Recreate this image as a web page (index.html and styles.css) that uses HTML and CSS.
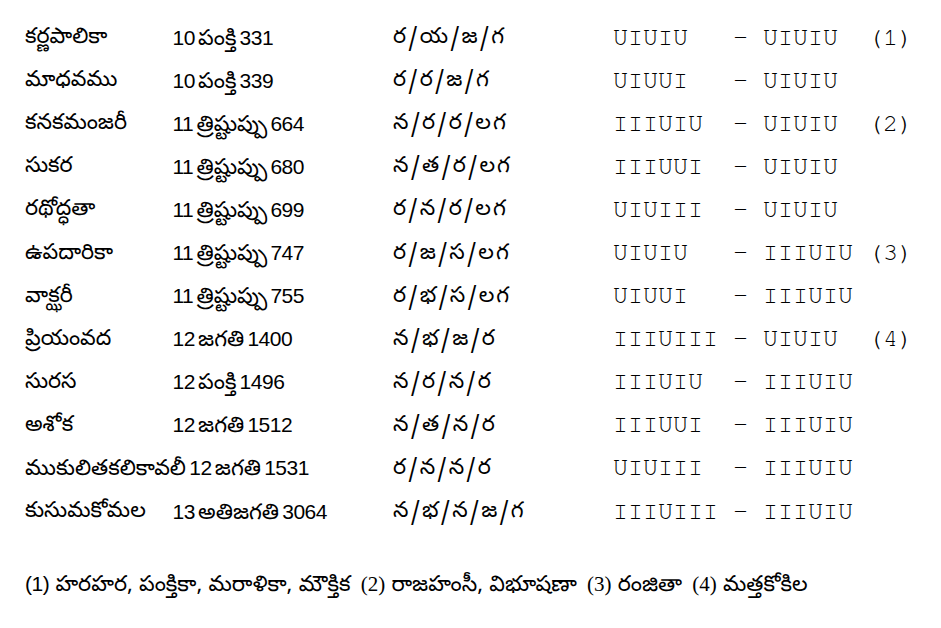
FILE: index.html
```html
<!DOCTYPE html>
<html lang="te">
<head>
<meta charset="utf-8">
<title>వృత్తములు</title>
<link rel="stylesheet" href="styles.css">
</head>
<body>
<div class="sheet">
  <div class="table">
    <div class="name">కర్ణపాలికా</div><div class="class"><span class="n">10</span> పంక్తి <span class="n">331</span></div><div class="gana">ర/య/జ/గ</div><div class="pat">UIUIU   - UIUIU  (1)</div>
    <div class="name">మాధవము</div><div class="class"><span class="n">10</span> పంక్తి <span class="n">339</span></div><div class="gana">ర/ర/జ/గ</div><div class="pat">UIUUI   - UIUIU</div>
    <div class="name">కనకమంజరీ</div><div class="class"><span class="n">11</span> త్రిష్టుప్పు <span class="n">664</span></div><div class="gana">న/ర/ర/లగ</div><div class="pat">IIIUIU  - UIUIU  (2)</div>
    <div class="name">సుకర</div><div class="class"><span class="n">11</span> త్రిష్టుప్పు <span class="n">680</span></div><div class="gana">న/త/ర/లగ</div><div class="pat">IIIUUI  - UIUIU</div>
    <div class="name">రథోద్ధతా</div><div class="class"><span class="n">11</span> త్రిష్టుప్పు <span class="n">699</span></div><div class="gana">ర/న/ర/లగ</div><div class="pat">UIUIII  - UIUIU</div>
    <div class="name">ఉపదారికా</div><div class="class"><span class="n">11</span> త్రిష్టుప్పు <span class="n">747</span></div><div class="gana">ర/జ/స/లగ</div><div class="pat">UIUIU   - IIIUIU (3)</div>
    <div class="name">వాక్ఝరీ</div><div class="class"><span class="n">11</span> త్రిష్టుప్పు <span class="n">755</span></div><div class="gana">ర/భ/స/లగ</div><div class="pat">UIUUI   - IIIUIU</div>
    <div class="name">ప్రియంవద</div><div class="class"><span class="n">12</span> జగతి <span class="n">1400</span></div><div class="gana">న/భ/జ/ర</div><div class="pat">IIIUIII - UIUIU  (4)</div>
    <div class="name">సురస</div><div class="class"><span class="n">12</span> పంక్తి <span class="n">1496</span></div><div class="gana">న/ర/న/ర</div><div class="pat">IIIUIU  - IIIUIU</div>
    <div class="name">అశోక</div><div class="class"><span class="n">12</span> జగతి <span class="n">1512</span></div><div class="gana">న/త/న/ర</div><div class="pat">IIIUUI  - IIIUIU</div>
    <div class="name wide">ముకులితకలికావలీ <span class="n">12</span> జగతి <span class="n">1531</span></div><div class="gana">ర/న/న/ర</div><div class="pat">UIUIII  - IIIUIU</div>
    <div class="name">కుసుమకోమల</div><div class="class"><span class="n">13</span> అతిజగతి <span class="n">3064</span></div><div class="gana">న/భ/న/జ/గ</div><div class="pat">IIIUIII - IIIUIU</div>
  </div>
  <p class="notes"><span class="n">(1)</span> హరహర, పంక్తికా, మరాళికా, మౌక్తిక <span class="num">(2)</span> రాజహంసీ, విభూషణా <span class="num">(3)</span> రంజితా <span class="num">(4)</span> మత్తకోకిల</p>
</div>
</body>
</html>
```

FILE: styles.css
```css
html, body {
  margin: 0;
  padding: 0;
  background: #ffffff;
}

.sheet {
  padding: 17.5px 0 0 25px;
  font-family: "Noto Sans Telugu", "Gautami", "Lohit Telugu", "Noto Sans", sans-serif;
  font-size: 22px;
  color: #000000;
}

.table {
  display: grid;
  grid-template-columns: 147.5px 220.5px 220px auto;
  grid-auto-rows: 43.1px;
  align-items: center;
}

.name, .class, .gana {
  white-space: nowrap;
  line-height: 1;
}

.class, .wide {
  word-spacing: -3px;
}

.wide {
  grid-column: span 2;
}

.n {
  font-family: "Liberation Sans", "Noto Sans", sans-serif;
  font-size: 21px;
  letter-spacing: -0.5px;
}

.gana {
  letter-spacing: 2px;
}

.pat {
  font-family: "Nimbus Mono PS", "Nimbus Mono L", "FreeMono", "Courier", "Liberation Mono", monospace;
  font-size: 25px;
  white-space: pre;
  color: #000000;
  line-height: 1;
  padding-bottom: 4px;
}

.notes {
  margin: 38.5px 0 0 0;
  white-space: nowrap;
  line-height: 1;
}

.num {
  font-family: "Liberation Serif", serif;
  font-size: 21px;
  margin-left: 4px;
}
```
